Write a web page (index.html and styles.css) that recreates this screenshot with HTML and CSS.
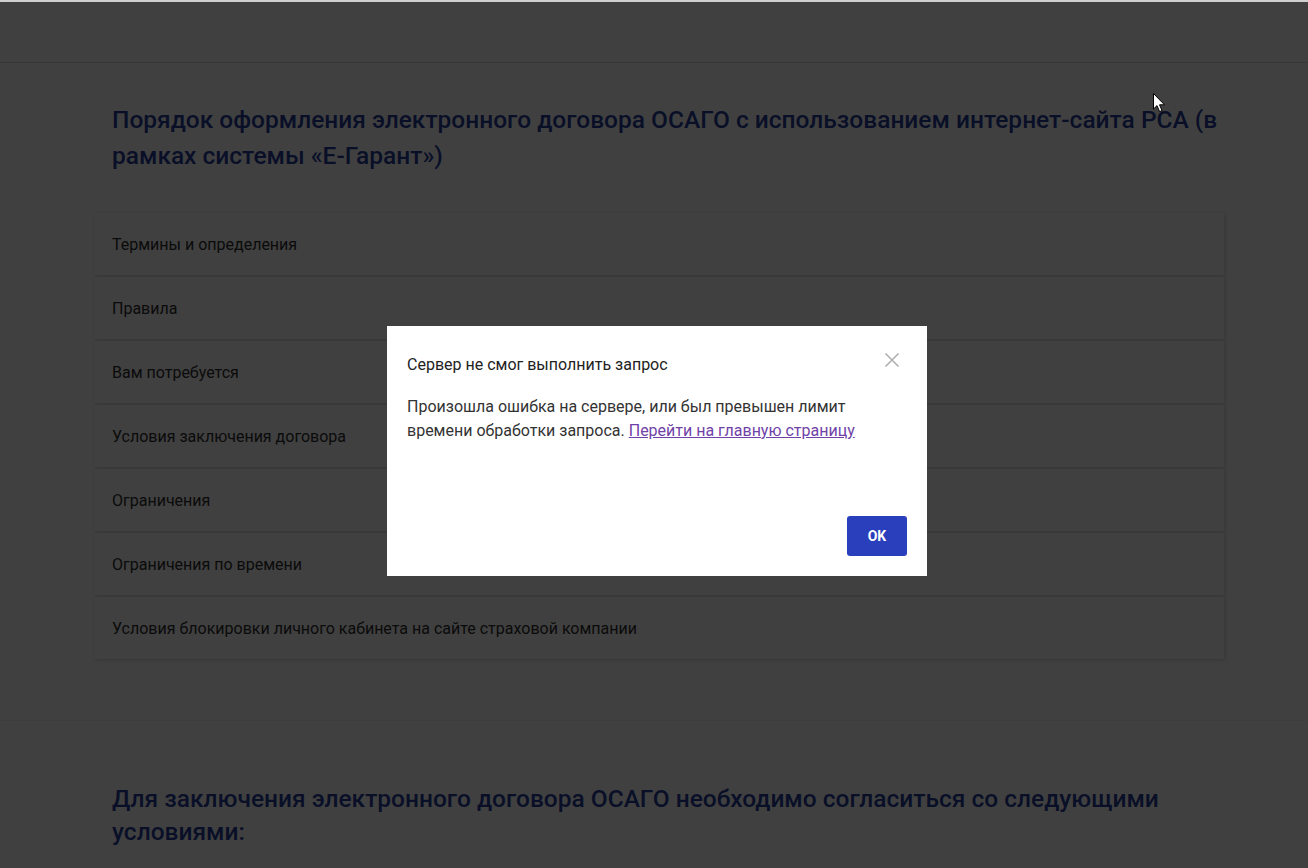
FILE: index.html
```html
<!DOCTYPE html>
<html lang="ru">
<head>
    <meta charset="UTF-8">
    <meta name="viewport" content="width=device-width, initial-scale=1.0">
    <title>Е-Гарант</title>
    <link rel="stylesheet" href="styles.css">
</head>
<body>
    <header class="top-bar"></header>

    <section class="section">
        <div class="container">
            <h2 class="section-title">Порядок оформления электронного договора ОСАГО с использованием интернет-сайта РСА (в рамках системы «Е-Гарант»)</h2>
            <ul class="accordion">
                <li class="accordion-item">Термины и определения</li>
                <li class="accordion-item">Правила</li>
                <li class="accordion-item">Вам потребуется</li>
                <li class="accordion-item">Условия заключения договора</li>
                <li class="accordion-item">Ограничения</li>
                <li class="accordion-item">Ограничения по времени</li>
                <li class="accordion-item">Условия блокировки личного кабинета на сайте страховой компании</li>
            </ul>
        </div>
    </section>

    <section class="section section-next">
        <div class="container">
            <h2 class="section-title">Для заключения электронного договора ОСАГО необходимо согласиться со следующими условиями:</h2>
        </div>
    </section>

    <div class="overlay">
        <div class="modal">
            <div class="modal-head">
                <h3 class="modal-title">Сервер не смог выполнить запрос</h3>
                <button class="modal-close" aria-label="Закрыть">
                    <svg width="16" height="16" viewBox="0 0 16 16"><path d="M1.5 1.5 L14.5 14.5 M14.5 1.5 L1.5 14.5" stroke="#b0b0b0" stroke-width="1.6" fill="none"/></svg>
                </button>
            </div>
            <p class="modal-text">Произошла ошибка на сервере, или был превышен лимит времени обработки запроса. <a href="#">Перейти на главную страницу</a></p>
            <div class="modal-foot">
                <button class="btn-ok">OK</button>
            </div>
        </div>
    </div>

    <svg class="cursor" width="13" height="20" viewBox="0 0 13 20"><path d="M0.5 0.5 L0.5 16 L4 12.6 L6.6 18.6 L9 17.6 L6.5 11.8 L11.5 11.8 Z" fill="#fff" stroke="#000" stroke-width="1"/></svg>
</body>
</html>
```

FILE: styles.css
```css
body {
    font-family: Roboto, 'Noto Sans', sans-serif;
    margin: 0;
    padding: 0;
    color: #333;
    background-color: #fff;
    border-top: 2px solid #cfcfcf;
    overflow: hidden;
}

.top-bar {
    height: 60px;
    border-bottom: 1px solid #dcdcdc;
}

.container {
    width: 1130px;
    margin-left: 94px;
}

.section {
    padding: 39px 0 59px;
}

.section-next {
    border-top: 1px solid #f4f4f4;
    padding-top: 61px;
}

.section-title {
    margin: 0;
    padding: 0 0 0 18px;
    font-size: 24.5px;
    line-height: 36px;
    font-weight: 500;
    color: #2b3f9e;
}

.section-next .section-title {
    line-height: 33px;
}

.accordion {
    list-style: none;
    margin: 39px 0 0;
    padding: 0;
}

.accordion-item {
    height: 62px;
    margin-bottom: 2px;
    padding: 0 18px;
    display: flex;
    align-items: center;
    font-size: 16px;
    font-weight: 400;
    color: #2e2e2e;
    background-color: #fff;
    box-shadow: 1px 1px 4px rgba(0,0,0,0.18);
}

.overlay {
    position: fixed;
    top: 2px;
    left: 0;
    right: 0;
    bottom: 0;
    background-color: rgba(0,0,0,0.75);
    display: flex;
    justify-content: center;
    align-items: flex-start;
    padding: 324px 0 0 6px;
}

.modal {
    width: 540px;
    height: 250px;
    box-sizing: border-box;
    background-color: #fff;
    padding: 26px 20px 20px;
    display: flex;
    flex-direction: column;
}

.modal-head {
    display: flex;
    justify-content: space-between;
    align-items: flex-start;
}

.modal-title {
    margin: 0;
    font-size: 16px;
    line-height: 26px;
    font-weight: 400;
    color: #222;
}

.modal-close {
    border: none;
    background: none;
    padding: 0;
    margin: 0 7px 0 0;
    width: 16px;
    height: 16px;
    cursor: pointer;
}

.modal-close svg {
    display: block;
}

.modal-text {
    margin: 17px 0 0;
    font-size: 16px;
    line-height: 24px;
    color: #333;
    padding-right: 40px;
}

.modal-text a {
    color: #6f42a8;
    text-decoration: underline;
}

.modal-foot {
    margin-top: auto;
    display: flex;
    justify-content: flex-end;
}

.btn-ok {
    width: 60px;
    height: 40px;
    border: none;
    border-radius: 3px;
    background-color: #2a3fbb;
    color: #fff;
    font-family: Roboto, sans-serif;
    font-size: 14px;
    font-weight: 700;
    cursor: pointer;
}

.cursor {
    position: fixed;
    left: 1153px;
    top: 93px;
}
```
